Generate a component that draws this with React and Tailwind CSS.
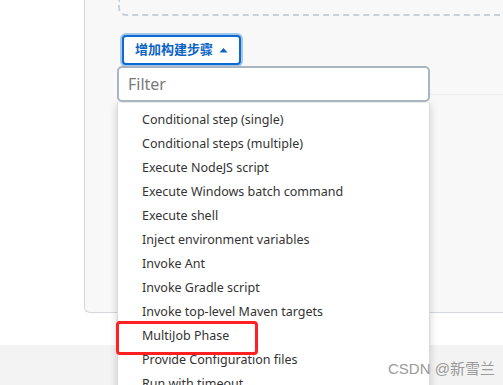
import { useState } from "react";

const steps = [
  "Conditional step (single)",
  "Conditional steps (multiple)",
  "Execute NodeJS script",
  "Execute Windows batch command",
  "Execute shell",
  "Inject environment variables",
  "Invoke Ant",
  "Invoke Gradle script",
  "Invoke top-level Maven targets",
  "MultiJob Phase",
  "Provide Configuration files",
  "Run with timeout",
];

export default function App() {
  const [filter, setFilter] = useState("");

  return (
    <div className="relative w-full h-[385px] overflow-hidden bg-white flex flex-col font-['Noto_Sans','Noto_Sans_CJK_SC',sans-serif]">
      {/* Config section panel */}
      <div className="ml-[84px] h-[313px] shrink-0 flex flex-col items-start border-l border-b border-[#d4d8dd] rounded-bl-md bg-[#f8f8f8] pl-[33px]">
        <div className="self-stretch h-[16px] border-l-2 border-b-2 border-dashed border-[#c8d0d8] rounded-bl-lg" />
        <button className="mt-[19px] ml-[4px] h-[30px] w-[119px] flex items-center justify-center gap-[6px] rounded-[4px] border-2 border-[#0b6bd3] bg-white ring-2 ring-[#a3c6ea] text-[13px] font-semibold text-[#0b63c5]">
          增加构建步骤
          <svg width="9" height="6" viewBox="0 0 9 6">
            <path d="M0.5 5.5 L4.5 1 L8.5 5.5 Z" fill="#0b63c5" />
          </svg>
        </button>
        <div className="mt-[29px] self-stretch border-t border-[#ececee]" />
      </div>
      <div className="mt-[32px] flex-1 bg-[#f3f3f3]" />

      {/* Add build step dropdown */}
      <div className="absolute left-[117px] top-[66px] w-[313px]">
        <input
          value={filter}
          onChange={(e) => setFilter(e.target.value)}
          placeholder="Filter"
          className="w-full h-[36px] rounded-[5px] border-2 border-[#a9b5c1] bg-white px-[9px] text-[16px] text-[#333] placeholder:text-[#7a7a7a] outline-none"
        />
        <ul className="mt-[1px] bg-white border-l border-r border-[#d7dade] shadow-[0_2px_8px_rgba(0,0,0,0.18)] pt-[5px] pb-2">
          {steps
            .filter((s) => s.toLowerCase().includes(filter.toLowerCase()))
            .map((s) => (
              <li key={s} className="h-[24px] flex items-center pl-[24px] text-[12.5px] text-[#333]">
                {s}
              </li>
            ))}
        </ul>
      </div>

      {/* Highlight annotation */}
      <div className="absolute left-[116px] top-[321px] w-[142px] h-[34px] rounded-[4px] border-[3px] border-[#ff2121]" />

      {/* Watermark */}
      <div className="absolute left-[388px] top-[358px] text-[15px] text-[#9a9a9a] font-['Liberation_Sans','Noto_Sans_CJK_SC',sans-serif]">
        CSDN @新雪兰
      </div>
    </div>
  );
}
